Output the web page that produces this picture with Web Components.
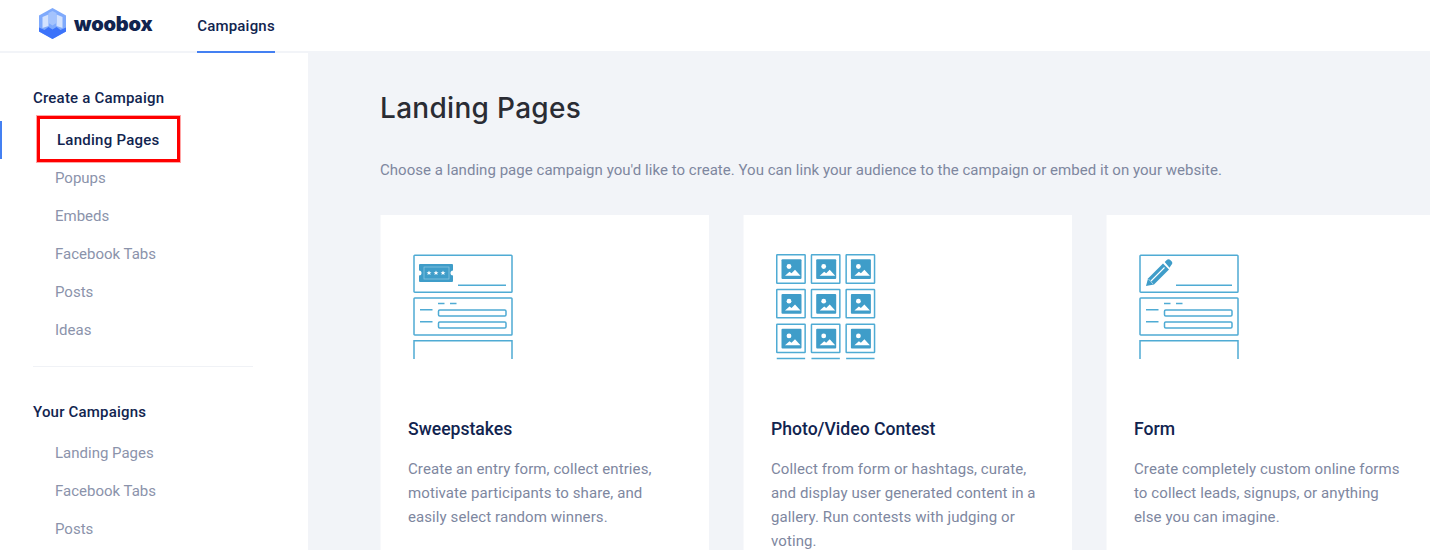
<!DOCTYPE html>
<html><head><meta charset="utf-8"><title>Woobox</title>
<style>
html,body{margin:0;padding:0;height:550px;overflow:hidden;background:#fff;font-family:Roboto,"Liberation Sans",sans-serif}
</style></head><body>
<template id="t-top"><style>
:host{display:flex;height:51px;border-bottom:2px solid #f2f4f8;background:#fff;box-sizing:content-box;padding-left:38px;align-items:stretch}
.logo{display:flex;align-items:center;gap:7px;width:159px;padding-bottom:4px;box-sizing:border-box}
.word{font:900 20px/1 Inter,"Liberation Sans",sans-serif;color:#11244f;letter-spacing:-.2px}
.tab{font:500 15px/53px Roboto,sans-serif;letter-spacing:.2px;color:#11244f;height:53px;box-sizing:border-box;border-bottom:2px solid #4480f2;width:78px;text-align:center}
</style>
<div class="logo"><svg width="29" height="32" viewBox="0 0 29 32"><path d="M14.500 0 28 7.500v16L14.500 31 1 23.500v-16z" fill="#7faafc"/><path d="M4.500 9l6-2.500V18l-6 2zM24.500 9l-6-2.500V18l6 2z" fill="#d3e2fe"/><path d="M10.500 5l4-2 4 2v10l-4 2.500-4-2.500z" fill="#a4c3fd"/><path d="M1 19.500 6.500 22l4-3 4 2.500 4-2.500 4 3 5.500-2.500v4L14.500 31 1 23.500z" fill="#3c73fa"/></svg><span class="word">woobox</span></div>
<div class="tab">Campaigns</div>
</template>

<template id="t-side"><style>
:host{display:block;width:308px;flex:none;box-sizing:border-box;padding-top:33px;background:#fff;height:497px;overflow:hidden}
::slotted(hr){border:0;border-top:1px solid #f0f2f6;margin:17px 55px 33px 33px}
</style><slot></slot></template>

<template id="t-head"><style>
:host{display:block;font:500 15px/24px Roboto,sans-serif;letter-spacing:.2px;color:#11244f;padding-left:33px;margin-bottom:10px}
:host([first]){margin-bottom:11px}
</style><slot></slot></template>

<template id="t-item"><style>
:host{display:block;position:relative;height:38px;font:400 15px/38px Roboto,sans-serif;letter-spacing:0;color:#8b93ab;padding-left:55px}
:host([active]){font-weight:500;color:#11244f;padding-left:57px;box-shadow:inset 2px 0 0 #4480f2;letter-spacing:.25px}
.mark{display:none;position:absolute;left:37px;top:-5px;width:143px;height:46px;box-sizing:border-box;border:3px solid #f00;box-shadow:0 0 0 1px rgba(255,0,0,.35)}
:host([active]) .mark{display:block}
</style><slot></slot><span class="mark"></span></template>

<template id="t-card"><style>
:host{display:block;flex:none;width:329px;height:400px;box-sizing:border-box;background:#fff;padding:39px 28px 0 27px;border-left:1px solid #f8f9fb}
.ico{display:block;height:106px;margin:0 0 55px 5px}
h3{margin:0 0 14px;font:500 17.600px/28px Roboto,sans-serif;color:#11244f}
p{margin:0;font:400 15px/24px Roboto,sans-serif;letter-spacing:.09px;color:#7e879f}
</style><div class="ico"><slot name="icon"></slot></div><h3><slot name="title"></slot></h3><p><slot></slot></p></template>

<template id="t-main"><style>
:host{display:block;flex:1;min-width:0;background:#f2f4f8;padding:31px 0 0 72px;height:497px;box-sizing:border-box;overflow:hidden}
h1{margin:0 0 26px;font:500 28px/48px Inter,sans-serif;color:#2a2c34;letter-spacing:.3px}
p{margin:0 0 33px;font:400 15px/24px Roboto,sans-serif;letter-spacing:.035px;color:#7e879f}
.cards{display:flex;gap:34px}
</style><h1><slot name="title"></slot></h1><p><slot name="lead"></slot></p><div class="cards"><slot></slot></div></template>

<template id="t-shell"><style>
:host{display:block;width:1430px;height:550px;overflow:hidden}
.body{display:flex}
</style><slot name="top"></slot><div class="body"><slot></slot></div></template>

<script>
for (const [tag,id] of [['wb-top','t-top'],['wb-side','t-side'],['wb-head','t-head'],['wb-item','t-item'],['wb-card','t-card'],['wb-main','t-main'],['wb-shell','t-shell']]) {
  customElements.define(tag, class extends HTMLElement {
    constructor(){super();this.attachShadow({mode:'open'}).appendChild(document.getElementById(id).content.cloneNode(true));}
  });
}
const C='#4fabd4',F='#3f9dc9';
const frame=x=>`<g fill="none" stroke="${C}" stroke-width="1.5"><rect x="1" y="1.250" width="98" height="37" rx=".8"/><path d="M${x} 31.250H93"/><rect x="1" y="44" width="98" height="37" rx=".8"/><path d="M25 49.500h6.500M37 49.500h6.500M7 55.750h12.500M7 67.750h12.500"/><rect x="25.500" y="56" width="67.500" height="6" rx="1.200"/><rect x="25.500" y="68" width="67.500" height="6" rx="1.200"/><path d="M1 105V86.750h98V105"/></g>`;
const star=(x,y)=>`<path transform="translate(${x} ${y}) scale(2.500)" d="M0-1 .29-.31 1-.31.45.12.62.81 0 .42-.62.81-.45.12-1-.31-.29-.31z" fill="#fff"/>`;
const ticket=`<path d="M7 10h32a1 1 0 0 1 1 1v5.500a2.500 2.500 0 0 0 0 5V27a1 1 0 0 1-1 1H7a1 1 0 0 1-1-1v-5.500a2.500 2.500 0 0 0 0-5V11a1 1 0 0 1 1-1z" fill="${F}"/><rect x="11" y="13" width="25" height="12" fill="none" stroke="#93cae3" stroke-width=".7"/>`+star(16,19)+star(23,19)+star(30,19);
const pencil=`<path d="M7 32l2-7.500L24 9.500l6 6L15 30.500z" fill="${F}"/><path d="M25.700 8 27.500 6.200a2.800 2.800 0 0 1 4 0l.8.8a2.800 2.800 0 0 1 0 4L30.500 13.800z" fill="${F}"/><path d="M12 27 25.500 13.500" stroke="#fff" stroke-width="1.100"/><path d="M9.500 25 14 30" stroke="#cfe8f4" stroke-width=".7"/>`;
function tile(x,y){return `<g transform="translate(${x} ${y})"><rect x=".75" y=".75" width="28.400" height="28.400" rx=".5" fill="none" stroke="${C}" stroke-width="1.500"/><rect x="5.500" y="5.300" width="20" height="19.800" rx="1" fill="${F}"/><circle cx="13" cy="12.500" r="2.400" fill="#fff"/><path d="M9 21.800l4.500-4 2 1.500 3.500-3.500 5.500 6z" fill="#fff"/></g>`;}
let grid='';
for(const y of [0,34.700,69.400])for(const x of [0,34.700,69.400])grid+=tile(x,y);
grid+=`<g fill="none" stroke="${C}" stroke-width="1.500"><path d="M.75 104.400h28.400M35.450 104.400h28.400M70.150 104.400h28.400"/></g>`;
const svg=b=>`<svg slot="icon" width="100" height="106" viewBox="0 0 100 106" style="display:block">${b}</svg>`;
const icon1=svg(frame(45)+ticket),icon2=svg(grid),icon3=svg(frame(37)+pencil);
document.body.insertAdjacentHTML('beforeend',`<wb-shell>
<wb-top slot="top"></wb-top>
<wb-side>
<wb-head first>Create a Campaign</wb-head>
<wb-item active>Landing Pages</wb-item>
<wb-item>Popups</wb-item>
<wb-item>Embeds</wb-item>
<wb-item>Facebook Tabs</wb-item>
<wb-item>Posts</wb-item>
<wb-item>Ideas</wb-item>
<hr>
<wb-head>Your Campaigns</wb-head>
<wb-item>Landing Pages</wb-item>
<wb-item>Facebook Tabs</wb-item>
<wb-item>Posts</wb-item>
</wb-side>
<wb-main>
<span slot="title">Landing Pages</span>
<span slot="lead">Choose a landing page campaign you'd like to create. You can link your audience to the campaign or embed it on your website.</span>
<wb-card>${icon1}<span slot="title">Sweepstakes</span>Create an entry form, collect entries, motivate participants to share, and easily select random winners.</wb-card>
<wb-card>${icon2}<span slot="title">Photo/Video Contest</span>Collect from form or hashtags, curate, and display user generated content in a gallery. Run contests with judging or voting.</wb-card>
<wb-card>${icon3}<span slot="title">Form</span>Create completely custom online forms to collect leads, signups, or anything else you can imagine.</wb-card>
</wb-main>
</wb-shell>`);
</script>
</body></html>
